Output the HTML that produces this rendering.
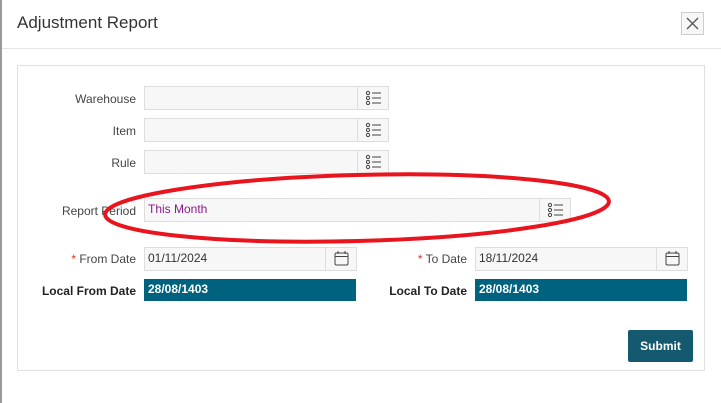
<!DOCTYPE html>
<html><head><style>
body{margin:0;width:721px;height:403px;background:#fff;font-family:"Liberation Sans",sans-serif;position:relative;overflow:hidden;color:#333}
.a{position:absolute}
.lbl{position:absolute;font-size:12px;color:#444;text-align:right;width:136px;left:0}
.inp{position:absolute;background:#f7f7f7;border:1px solid #ddd;box-sizing:border-box;font-size:12px;color:#333;padding:4px 3px;line-height:13px}
.btn{position:absolute;background:#f7f7f7;border:1px solid #ddd;box-sizing:border-box}
.loc{position:absolute;background:#00627e;color:#fff;font-weight:bold;font-size:12px;padding:4px 4px;box-sizing:border-box;line-height:13px}
</style></head><body>
<div class="a" style="left:0;top:0;width:2px;height:403px;background:#9a9a9a"></div>
<div class="a" style="left:17px;top:13px;font-size:17px;color:#333">Adjustment Report</div>
<div class="a" style="left:681px;top:12px;width:23px;height:23px;border:1px solid #ccc;box-sizing:border-box;background:#f7f7f7">
<svg width="21" height="21" viewBox="0 0 21 21"><path d="M5 5L16 16M16 5L5 16" stroke="#555" stroke-width="1.3"/></svg></div>
<div class="a" style="left:2px;top:48px;width:719px;height:1px;background:#e5e5e5"></div>
<div class="a" style="left:17px;top:65px;width:688px;height:306px;border:1px solid #e0e0e0;box-sizing:border-box"></div>

<div class="lbl" style="top:92px">Warehouse</div>
<div class="inp" style="left:144px;top:86px;width:214px;height:24px"></div>
<div class="btn" style="left:357px;top:86px;width:32px;height:24px"><svg width="30" height="22"><g fill="none" stroke="#444"><circle cx="10" cy="6" r="1.6"/><circle cx="10" cy="11" r="1.6"/><circle cx="10" cy="16" r="1.6"/><path d="M14 6h9M14 11h9M14 16h9"/></g></svg></div>
<div class="lbl" style="top:124px">Item</div>
<div class="inp" style="left:144px;top:118px;width:214px;height:24px"></div>
<div class="btn" style="left:357px;top:118px;width:32px;height:24px"><svg width="30" height="22"><g fill="none" stroke="#444"><circle cx="10" cy="6" r="1.6"/><circle cx="10" cy="11" r="1.6"/><circle cx="10" cy="16" r="1.6"/><path d="M14 6h9M14 11h9M14 16h9"/></g></svg></div>
<div class="lbl" style="top:156px">Rule</div>
<div class="inp" style="left:144px;top:150px;width:214px;height:24px"></div>
<div class="btn" style="left:357px;top:150px;width:32px;height:24px"><svg width="30" height="22"><g fill="none" stroke="#444"><circle cx="10" cy="6" r="1.6"/><circle cx="10" cy="11" r="1.6"/><circle cx="10" cy="16" r="1.6"/><path d="M14 6h9M14 11h9M14 16h9"/></g></svg></div>

<div class="lbl" style="top:204px">Report Period</div>
<div class="inp" style="left:144px;top:198px;width:396px;height:24px;color:#8b1a8b">This Month</div>
<div class="btn" style="left:539px;top:198px;width:32px;height:24px"><svg width="30" height="22"><g fill="none" stroke="#444"><circle cx="10" cy="6" r="1.6"/><circle cx="10" cy="11" r="1.6"/><circle cx="10" cy="16" r="1.6"/><path d="M14 6h9M14 11h9M14 16h9"/></g></svg></div>

<div class="lbl" style="top:252px"><span style="color:#d33">*</span> From Date</div>
<div class="inp" style="left:144px;top:247px;width:182px;height:24px">01/11/2024</div>
<div class="btn" style="left:325px;top:247px;width:32px;height:24px"><svg width="30" height="22"><g fill="none" stroke="#444"><rect x="9" y="5" width="13" height="12" rx="1.5"/><path d="M9 8.5h13M12 3v3M19 3v3"/></g></svg></div>
<div class="a" style="left:380px;top:252px;width:87px;text-align:right;font-size:12px;color:#444"><span style="color:#d33">*</span> To Date</div>
<div class="inp" style="left:475px;top:247px;width:182px;height:24px">18/11/2024</div>
<div class="btn" style="left:656px;top:247px;width:32px;height:24px"><svg width="30" height="22"><g fill="none" stroke="#444"><rect x="9" y="5" width="13" height="12" rx="1.5"/><path d="M9 8.5h13M12 3v3M19 3v3"/></g></svg></div>

<div class="lbl" style="top:284px;font-weight:bold;color:#222">Local From Date</div>
<div class="loc" style="left:144px;top:279px;width:212px;height:22px">28/08/1403</div>
<div class="a" style="left:380px;top:284px;width:87px;text-align:right;font-size:12px;font-weight:bold;color:#222">Local To Date</div>
<div class="loc" style="left:475px;top:279px;width:212px;height:22px">28/08/1403</div>

<div class="a" style="left:628px;top:330px;width:65px;height:32px;background:#15596f;border-radius:2px;color:#fff;font-weight:bold;font-size:12px;text-align:center;line-height:32px">Submit</div>

<svg class="a" style="left:0;top:0" width="721" height="403"><ellipse cx="357" cy="208" rx="252" ry="33" transform="rotate(-1.5 357 208)" fill="none" stroke="#e8141e" stroke-width="4"/></svg>
</body></html>
